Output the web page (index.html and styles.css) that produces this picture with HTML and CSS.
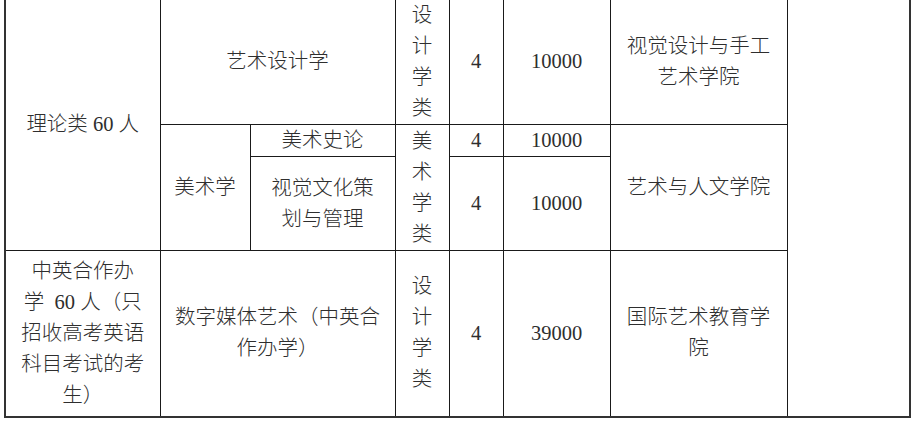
FILE: index.html
```html
<!DOCTYPE html>
<html lang="zh-CN">
<head>
<meta charset="utf-8">
<title>招生专业表</title>
<link rel="stylesheet" href="styles.css">
</head>
<body>
<table class="plan">
  <colgroup>
    <col class="c1"><col class="c2"><col class="c3"><col class="c4">
    <col class="c5"><col class="c6"><col class="c7"><col class="c8">
  </colgroup>
  <tbody>
    <tr class="r1">
      <td rowspan="3" class="edge-l">理论类 60 人</td>
      <td colspan="2">艺术设计学</td>
      <td class="vert">设<br>计<br>学<br>类</td>
      <td>4</td>
      <td>10000</td>
      <td>视觉设计与手工<br>艺术学院</td>
      <td rowspan="4" class="blank edge-r edge-b"></td>
    </tr>
    <tr class="r2">
      <td rowspan="2">美术学</td>
      <td>美术史论</td>
      <td rowspan="2" class="vert">美<br>术<br>学<br>类</td>
      <td>4</td>
      <td>10000</td>
      <td rowspan="2">艺术与人文学院</td>
    </tr>
    <tr class="r3">
      <td>视觉文化策<br>划与管理</td>
      <td>4</td>
      <td>10000</td>
    </tr>
    <tr class="r4">
      <td class="edge-l edge-b">中英合作办<br>学&nbsp;&nbsp;60 人（只<br>招收高考英语<br>科目考试的考<br>生）</td>
      <td colspan="2" class="edge-b">数字媒体艺术（中英合<br>作办学）</td>
      <td class="vert edge-b">设<br>计<br>学<br>类</td>
      <td class="edge-b">4</td>
      <td class="edge-b">39000</td>
      <td class="edge-b">国际艺术教育学<br>院</td>
    </tr>
  </tbody>
</table>
</body>
</html>
```

FILE: styles.css
```css
html, body {
  margin: 0;
  padding: 0;
  background: #ffffff;
}

.plan {
  border-collapse: collapse;
  table-layout: fixed;
  width: 906px;
  margin: -2px 0 0 4px;
  font-family: "Liberation Serif", "Noto Sans CJK SC", serif;
  font-size: 20.5px;
  font-weight: 300;
  line-height: 31px;
  color: #2e2e2e;
}

.plan td {
  border: 1px solid #1a1a1a;
  padding: 0 2px;
  text-align: center;
  vertical-align: middle;
  white-space: nowrap;
}

.plan td.vert {
  padding: 0;
}

.plan td.edge-l { border-left: 2px solid #333333; }
.plan td.edge-r { border-right: 2px solid #333333; }
.plan td.edge-b { border-bottom: 2px solid #333333; }

.c1 { width: 155px; }
.c2 { width: 90px; }
.c3 { width: 145px; }
.c4 { width: 54px; }
.c5 { width: 54px; }
.c6 { width: 107px; }
.c7 { width: 177px; }
.c8 { width: 123px; }

.r1 { height: 126px; }
.r2 { height: 31px; }
.r3 { height: 94px; }
.r4 { height: 166px; }
```
